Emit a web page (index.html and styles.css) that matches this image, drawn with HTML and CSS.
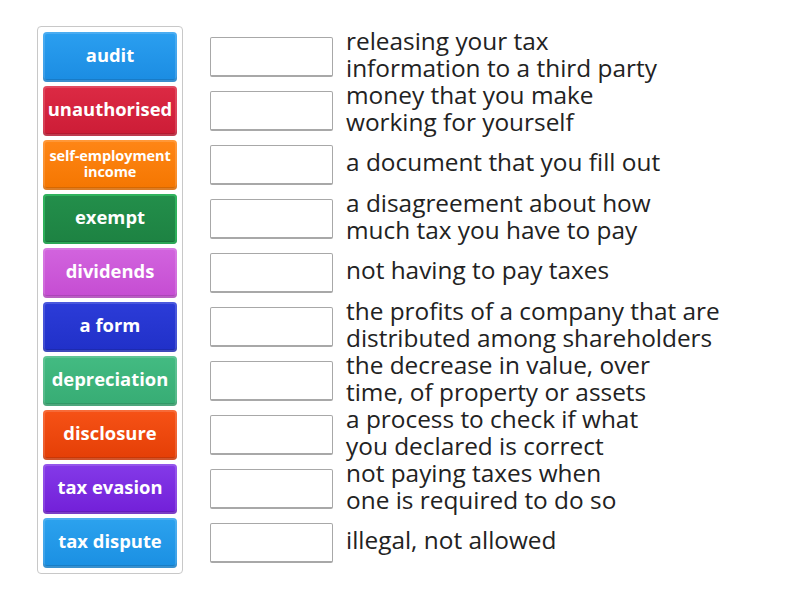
FILE: index.html
```html
<!DOCTYPE html>
<html>
<head>
<meta charset="utf-8">
<link rel="stylesheet" href="styles.css">
</head>
<body>
<div class="page">
  <div class="panel">
    <div class="tile t-audit">audit</div>
    <div class="tile t-unauth">unauthorised</div>
    <div class="tile t-self small">self-employment<br>income</div>
    <div class="tile t-exempt">exempt</div>
    <div class="tile t-div">dividends</div>
    <div class="tile t-form">a form</div>
    <div class="tile t-dep">depreciation</div>
    <div class="tile t-disc">disclosure</div>
    <div class="tile t-evas">tax evasion</div>
    <div class="tile t-disp">tax dispute</div>
  </div>
  <div class="answers">
    <div class="row"><div class="slot"></div><div class="def">releasing your tax<br>information to a third party</div></div>
    <div class="row"><div class="slot"></div><div class="def">money that you make<br>working for yourself</div></div>
    <div class="row"><div class="slot"></div><div class="def">a document that you fill out</div></div>
    <div class="row"><div class="slot"></div><div class="def">a disagreement about how<br>much tax you have to pay</div></div>
    <div class="row"><div class="slot"></div><div class="def">not having to pay taxes</div></div>
    <div class="row"><div class="slot"></div><div class="def">the profits of a company that are<br>distributed among shareholders</div></div>
    <div class="row"><div class="slot"></div><div class="def">the decrease in value, over<br>time, of property or assets</div></div>
    <div class="row"><div class="slot"></div><div class="def">a process to check if what<br>you declared is correct</div></div>
    <div class="row"><div class="slot"></div><div class="def">not paying taxes when<br>one is required to do so</div></div>
    <div class="row"><div class="slot"></div><div class="def">illegal, not allowed</div></div>
  </div>
</div>
</body>
</html>
```
FILE: styles.css
```css
html, body {
  margin: 0;
  padding: 0;
  background: #fff;
  font-family: "Open Sans", "Liberation Sans", sans-serif;
}
.page {
  display: flex;
  align-items: flex-start;
  padding: 26px 0 0 37px;
}
.panel {
  width: 134px;
  padding: 5px;
  border: 1px solid #c8c8c8;
  border-radius: 4px;
  display: flex;
  flex-direction: column;
  gap: 4px;
}
.tile {
  height: 50px;
  box-sizing: border-box;
  border-radius: 4px;
  display: flex;
  align-items: center;
  justify-content: center;
  text-align: center;
  color: #fff;
  font-weight: 700;
  font-size: 18.4px;
  line-height: 1;
  padding-bottom: 3px;
  white-space: nowrap;
  box-shadow: inset 0 0 0 2px rgba(255,255,255,0.15), inset 0 -3px 0 rgba(0,0,0,0.12);
}
.tile.small {
  font-size: 14.5px;
  line-height: 16px;
  letter-spacing: -0.1px;
  padding-bottom: 2px;
}
.t-audit { background: linear-gradient(#2b9ff0, #1b8ce2); }
.t-unauth { background: linear-gradient(#dc2a44, #cc1c36); }
.t-self { background: linear-gradient(#ff8616, #f47600); }
.t-exempt { background: linear-gradient(#238f4b, #1d8242); box-shadow: inset 0 0 0 2px rgba(60,210,110,0.55), inset 0 -3px 0 rgba(0,0,0,0.12); }
.t-div { background: linear-gradient(#d264de, #c54cd2); }
.t-form { background: linear-gradient(#2c3cd8, #2030c8); }
.t-dep { background: linear-gradient(#43bb82, #37ac74); }
.t-disc { background: linear-gradient(#f65216, #e43e06); }
.t-evas { background: linear-gradient(#843ae8, #721fd8); }
.t-disp { background: linear-gradient(#2ca2ee, #1a8fe2); }
.answers {
  margin: 6px 0 0 27px;
  display: flex;
  flex-direction: column;
  gap: 4px;
}
.row {
  height: 50px;
  display: flex;
  align-items: center;
  gap: 13px;
}
.slot {
  width: 123px;
  height: 40px;
  box-sizing: border-box;
  border: 1px solid #a8a8a8;
  border-bottom-width: 2px;
  border-radius: 2px;
  background: #fff;
  flex: none;
}
.def {
  font-size: 24.4px;
  line-height: 27px;
  color: #222;
  white-space: nowrap;
  margin-top: -7px;
}
```
